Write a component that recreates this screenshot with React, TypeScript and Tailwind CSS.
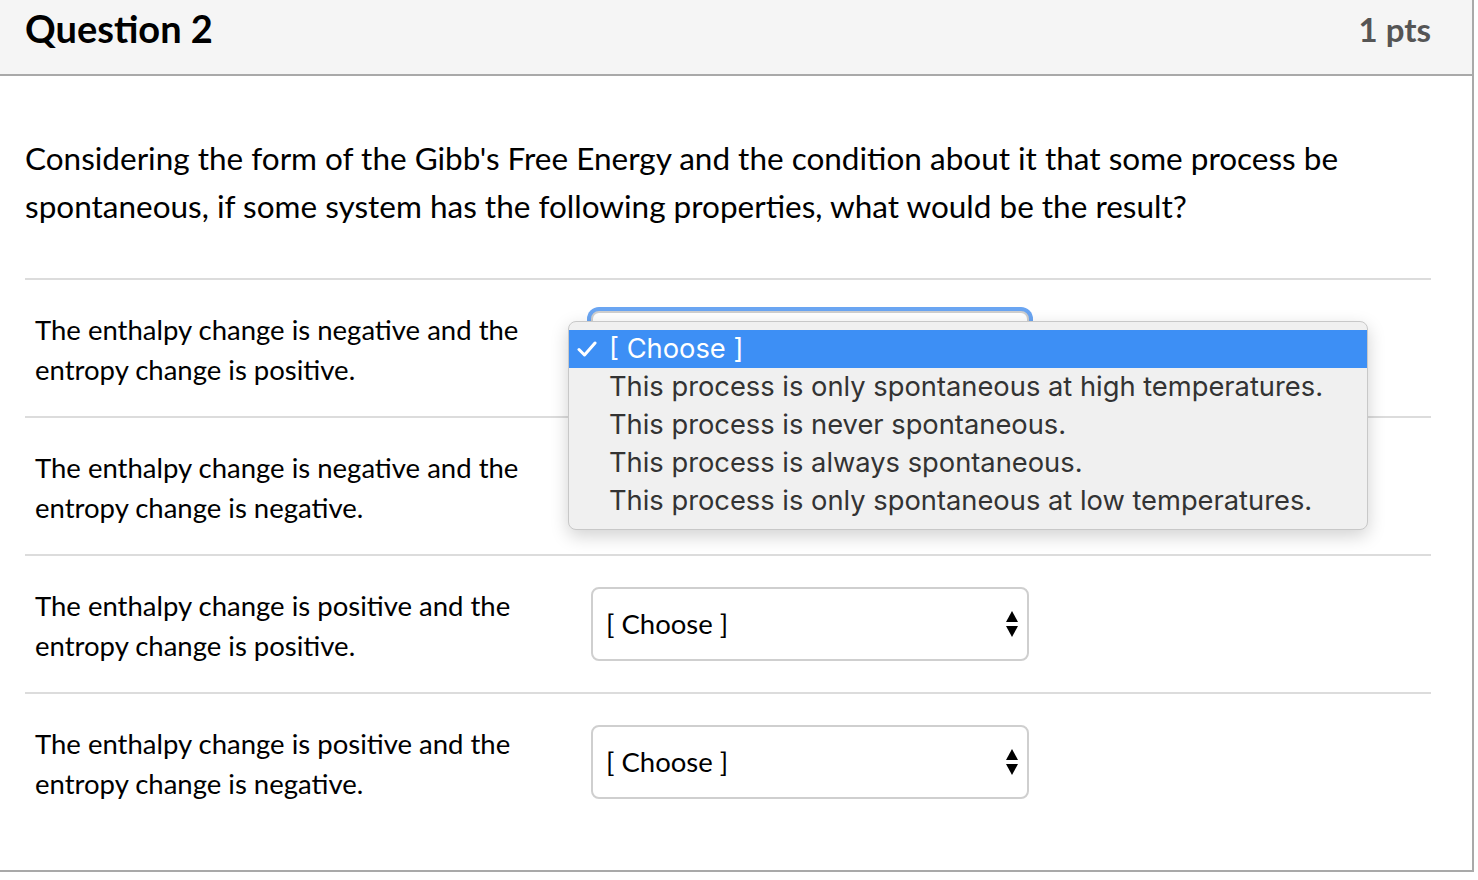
import React from "react";

const rows = [
  "The enthalpy change is negative and the entropy change is positive.",
  "The enthalpy change is negative and the entropy change is negative.",
  "The enthalpy change is positive and the entropy change is positive.",
  "The enthalpy change is positive and the entropy change is negative.",
];

const options = [
  "This process is only spontaneous at high temperatures.",
  "This process is never spontaneous.",
  "This process is always spontaneous.",
  "This process is only spontaneous at low temperatures.",
];

function Arrows() {
  return (
    <svg width="12" height="26" viewBox="0 0 12 26" className="shrink-0">
      <path d="M6 0 L12 11 L0 11 Z" fill="#000" />
      <path d="M0 15 L12 15 L6 26 Z" fill="#000" />
    </svg>
  );
}

function SelectBox({ open }: { open?: boolean }) {
  return (
    <div className="relative">
      <div
        className={
          open
            ? "w-[438px] h-[74px] rounded-[8px] border-2 border-[#cfcfcf] bg-white flex items-center justify-between pl-[13px] pr-[9px] ring-4 ring-[#6aa5f2]"
            : "w-[438px] h-[74px] rounded-[8px] border-2 border-[#cfcfcf] bg-white flex items-center justify-between pl-[13px] pr-[9px]"
        }
      >
        <span className="text-[27.5px] text-black">[ Choose ]</span>
        <Arrows />
      </div>
      {open && <Menu />}
    </div>
  );
}

function Menu() {
  return (
    <div className="absolute left-[-23px] top-[10px] w-[800px] rounded-[8px] border border-[#c8c8c8] bg-[#f0f0f0] pt-[8px] pb-[9px] shadow-[0_6px_18px_rgba(0,0,0,0.18)] z-10 font-['Inter','Roboto',sans-serif]">
      <div className="h-[38px] bg-[#3d8ff5] text-white flex items-center text-[27.3px]">
        <span className="w-[40px] flex justify-start pl-[8px]">
          <svg width="20" height="16" viewBox="0 0 20 16">
            <path d="M2 8.5 L7.5 14 L18 2" stroke="#fff" strokeWidth="3" fill="none" strokeLinecap="round" strokeLinejoin="round" />
          </svg>
        </span>
        <span>[ Choose ]</span>
      </div>
      {options.map((o) => (
        <div key={o} className="h-[38px] flex items-center pl-[40px] text-[27.3px] text-[#333]">
          {o}
        </div>
      ))}
    </div>
  );
}

export default function App() {
  return (
    <div className="w-[1478px] h-[880px] bg-white font-['Lato',sans-serif] text-black">
      <div className="w-[1474px] h-[872px] border-r-2 border-b-2 border-[#a9a9a9] flex flex-col">
        <div className="h-[76px] bg-[#f5f5f5] border-b-2 border-[#a9a9a9] flex items-center justify-between pl-[25px] pr-[41px]">
          <h2 className="text-[38px] font-bold leading-none pb-[18px]">Question 2</h2>
          <span className="text-[33px] font-bold text-[#555] leading-none pb-[16px]">1 pts</span>
        </div>
        <div className="pl-[25px] pr-[41px]">
          <p className="mt-[58px] mb-[48px] text-[31.5px] leading-[48px]">
            Considering the form of the Gibb's Free Energy and the condition about it that some process be spontaneous, if some system has the following properties, what would be the result?
          </p>
          {rows.map((r, i) => (
            <div key={r} className="h-[138px] border-t-2 border-[#dcdcdc] flex items-center">
              <div className="w-[566px] pl-[10px] pr-[20px] pt-[3px] text-[27.5px] leading-[40px]">{r}</div>
              <SelectBox open={i === 0} />
            </div>
          ))}
        </div>
      </div>
    </div>
  );
}
